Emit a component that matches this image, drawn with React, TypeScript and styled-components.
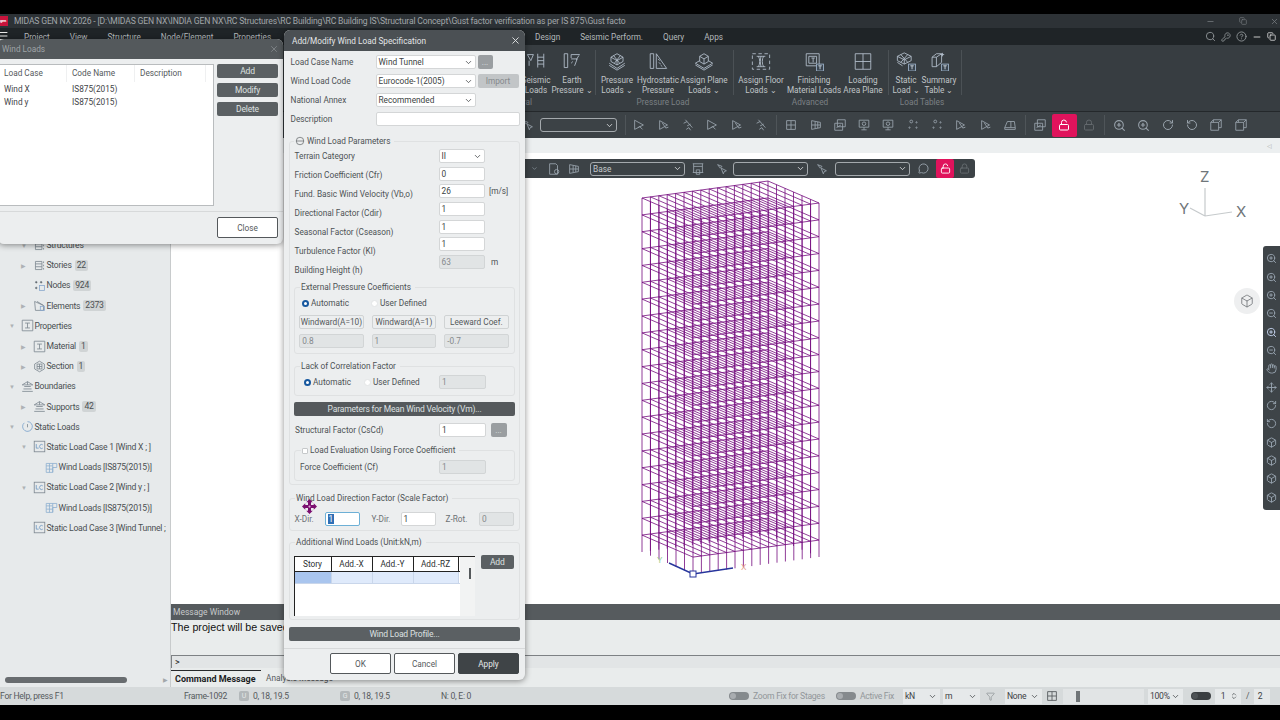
import React from "react";
import styled, { createGlobalStyle } from "styled-components";
import { ChevronDown, ChevronsUpDown, Search, KeyRound, CircleHelp, Minus, Copy, X, ZoomIn, ZoomOut, Hand, Box, LockOpen, Lock, Filter, Move, RotateCw, RotateCcw, MessageCircle, Menu } from "lucide-react";

const GlobalStyle = createGlobalStyle`
    html, body { margin: 0; padding: 0; background: #000; }
    * { box-sizing: border-box; }
    #root { font-family: "Roboto", "Liberation Sans", sans-serif; }
`;

const Page = styled.div`
    width: 1280px;
    height: 720px;
    position: relative;
    overflow: hidden;
    background: #000;
    display: flex;
    flex-direction: column;
    font-size: 8.25px;
    color: #4d5255;
`;

const BlackBand = styled.div<{ $h: number }>`
    height: ${(p) => p.$h}px;
    flex: none;
    background: #000;
`;

/* title + menu */
const TitleBar = styled.div`
    height: 14px;
    flex: none;
    background: #2d3236;
    display: flex;
    align-items: center;
    color: #a1a6a9;
    font-size: 8.6px;
    letter-spacing: -0.17px;
    white-space: nowrap;
`;

const Logo = styled.div`
    width: 8px;
    height: 10px;
    background: #c8143c;
    margin-right: 6px;
    color: #fff;
    font-size: 4px;
    font-weight: 700;
    line-height: 10px;
    overflow: hidden;
`;

const WindowControls = styled.div`
    margin-left: auto;
    display: flex;
    width: 74px;
    justify-content: space-between;
    padding-right: 1px;
    color: #777c80;
`;

const MenuBar = styled.div`
    height: 17px;
    flex: none;
    background: #1f2427;
    color: #b4b9bc;
    font-size: 8.2px;
    display: flex;
    align-items: center;
    gap: 20px;
    padding-left: 24px;
    position: relative;
`;

const MenuSpacer = styled.div`
    width: 224px;
`;

const HamburgerSlot = styled.div`
    position: absolute;
    left: -3px;
    top: 2px;
    color: #e8e8e8;
`;

const MenuIcons = styled.div`
    margin-left: auto;
    display: flex;
    align-items: center;
    gap: 5px;
    padding-right: 4px;
    color: #8f9598;
`;

/* ribbon */
const Ribbon = styled.div`
    height: 67px;
    flex: none;
    background: #373d41;
    display: flex;
    padding-left: 518px;
    border-bottom: 1px solid #24282b;
`;

const RibbonGroup = styled.div<{ $w: number }>`
    width: ${(p) => p.$w}px;
    flex: none;
    display: flex;
    flex-direction: column;
`;

const RibbonItems = styled.div`
    display: flex;
    height: 50px;
    padding-top: 7px;
`;

const RibbonItem = styled.div<{ $w: number }>`
    width: ${(p) => p.$w}px;
    display: flex;
    flex-direction: column;
    align-items: center;
    color: #c0c5c8;
    font-size: 8.2px;
    line-height: 10px;
    text-align: center;
    white-space: nowrap;
    svg.big { margin-bottom: 4px; flex: none; }
`;

const GroupLabel = styled.div<{ $right?: number }>`
    color: #7b8084;
    font-size: 8.25px;
    line-height: 11px;
    margin-top: 1.5px;
    white-space: nowrap;
    text-align: ${(p) => (p.$right ? "right" : "center")};
    padding-right: ${(p) => p.$right ?? 0}px;
    direction: ${(p) => (p.$right ? "rtl" : "ltr")};
`;

const RibbonSep = styled.div<{ $ml: number }>`
    width: 1px;
    margin: 5px 0 16px ${(p) => p.$ml}px;
    background: #4b5155;
`;

/* toolbar */
const Toolbar = styled.div`
    height: 26px;
    flex: none;
    background: #3c4246;
    display: flex;
    align-items: center;
    padding-left: 516px;
    color: #98a2ab;
`;

const ToolBtn = styled.div<{ $active?: boolean; $dim?: boolean }>`
    width: 24.3px;
    height: 23px;
    flex: none;
    display: flex;
    align-items: center;
    justify-content: center;
    border-radius: 2px;
    background: ${(p) => (p.$active ? "#e0135c" : "transparent")};
    color: ${(p) => (p.$active ? "#fff" : p.$dim ? "#62686c" : "inherit")};
`;

const ToolSep = styled.div<{ $ml: number; $mr: number }>`
    width: 1px;
    height: 20px;
    background: #4f5559;
    margin: 0 ${(p) => p.$mr}px 0 ${(p) => p.$ml}px;
`;

const DarkSelect = styled.div<{ $w: number; $ml?: number }>`
    width: ${(p) => p.$w}px;
    height: 14px;
    flex: none;
    margin-left: ${(p) => p.$ml ?? 0}px;
    border: 1px solid #a4a9ad;
    border-radius: 3px;
    color: #c6cacd;
    font-size: 8.25px;
    padding: 0 2px;
    display: flex;
    align-items: center;
    justify-content: space-between;
    svg { color: #eef0f1; }
`;

/* workspace */
const Workspace = styled.div`
    flex: 1;
    min-height: 0;
    display: flex;
`;

const LeftPanel = styled.div`
    width: 171px;
    flex: none;
    background: #e7eaeb;
    border-right: 1px solid #c8cbcc;
    display: flex;
    flex-direction: column;
    overflow: hidden;
`;

const Tree = styled.div`
    flex: 1;
    padding-top: 97px;
`;

const TreeRow = styled.div<{ $level: number }>`
    height: 20.2px;
    display: flex;
    align-items: center;
    padding-left: ${(p) => 9 + p.$level * 12}px;
    white-space: nowrap;
    color: #4a4f52;
    font-size: 8.6px;
    letter-spacing: -0.23px;
`;

const Arrow = styled.span<{ $hide?: boolean }>`
    width: 12px;
    flex: none;
    font-size: 6px;
    color: #aeb2b5;
    visibility: ${(p) => (p.$hide ? "hidden" : "visible")};
`;

const TreeIcon = styled.span`
    width: 13px;
    height: 13px;
    flex: none;
    margin-right: 0.5px;
    color: #7d8790;
    display: flex;
`;

const Count = styled.span`
    background: #d0d4d5;
    border-radius: 2px;
    margin-left: 3px;
    padding: 0 2px;
    line-height: 11px;
`;

const ScrollRow = styled.div`
    height: 9px;
    flex: none;
    margin-bottom: 3px;
    position: relative;
    display: flex;
    align-items: center;
    padding-left: 5px;
`;

const ScrollThumb = styled.div`
    width: 122px;
    height: 6px;
    border-radius: 3px;
    background: #686c6f;
`;

const ScrollEnd = styled.div`
    margin-left: 36px;
    font-size: 6px;
    color: #a2a7aa;
`;

const RightColumn = styled.div`
    flex: 1;
    display: flex;
    flex-direction: column;
    min-width: 0;
`;

const Strip = styled.div`
    height: 15px;
    flex: none;
    background: #eceff0;
    display: flex;
    justify-content: flex-end;
    align-items: center;
    padding-right: 8px;
    color: #a7abae;
    font-size: 6px;
`;

const Viewport = styled.div`
    flex: 1;
    background: #fff;
    position: relative;
`;

const ViewSvg = styled.svg`
    position: absolute;
    left: 0;
    top: 0;
`;

const FloatBar = styled.div`
    position: absolute;
    left: 354px;
    top: 6px;
    width: 450px;
    height: 19px;
    background: #3c4246;
    border-radius: 0 3px 3px 0;
    display: flex;
    align-items: center;
    color: #98a2ab;
`;

const FloatIcon = styled.div<{ $w: number; $active?: boolean; $dim?: boolean }>`
    width: ${(p) => p.$w}px;
    height: 19px;
    flex: none;
    display: flex;
    align-items: center;
    justify-content: center;
    background: ${(p) => (p.$active ? "#e0135c" : "transparent")};
    border-radius: 2px;
    color: ${(p) => (p.$active ? "#fff" : p.$dim ? "#666c70" : "inherit")};
`;

const Dock = styled.div`
    position: absolute;
    right: 0;
    top: 93px;
    width: 17px;
    height: 264px;
    background: #3e4448;
    border-radius: 3px 0 0 3px;
    padding-top: 0;
    display: flex;
    flex-direction: column;
    justify-content: space-evenly;
    align-items: center;
    color: #98a4b0;
`;

const CubeButton = styled.div`
    position: absolute;
    left: 1063px;
    top: 135px;
    width: 26px;
    height: 26px;
    border-radius: 50%;
    background: #eeeff0;
    color: #5a5f63;
    display: flex;
    align-items: center;
    justify-content: center;
`;

/* message window */
const MessageWindow = styled.div`
    height: 83px;
    flex: none;
    display: flex;
    flex-direction: column;
    background: #e9ecec;
`;

const MessageHeader = styled.div`
    height: 16px;
    background: #565b5e;
    color: #c6c9cb;
    padding-left: 2px;
    line-height: 16px;
    font-size: 8.5px;
`;

const MessageBody = styled.div`
    height: 35px;
    color: #111;
    font-family: "Liberation Sans", sans-serif;
    font-size: 10.7px;
    line-height: 14px;
`;

const CommandLine = styled.div`
    height: 13px;
    background: #e2e5e6;
    border-top: 1px solid #7d8184;
    border-left: 1px solid #7d8184;
    color: #222;
    font-size: 9px;
    padding-left: 3px;
    line-height: 13px;
`;

const Tabs = styled.div`
    flex: 1;
    display: flex;
    align-items: flex-end;
    margin-top: 2px;
`;

const Tab = styled.div<{ $active?: boolean }>`
    height: 17px;
    line-height: 17px;
    width: ${(p) => (p.$active ? "90px" : "auto")};
    padding-left: 4px;
    margin-left: ${(p) => (p.$active ? "0" : "1px")};
    border-top: ${(p) => (p.$active ? "1px solid #26292b" : "0")};
    color: ${(p) => (p.$active ? "#1b1d1f" : "#575b5e")};
    font-weight: ${(p) => (p.$active ? 700 : 400)};
    font-size: ${(p) => (p.$active ? "9px" : "8.3px")};
    white-space: nowrap;
`;

/* status */
const StatusBar = styled.div`
    height: 18px;
    flex: none;
    background: #d6dadb;
    display: flex;
    align-items: center;
    color: #55595c;
    font-size: 8.6px;
    letter-spacing: -0.28px;
    white-space: nowrap;
`;

const StatusCell = styled.div<{ $w: number; $dim?: boolean; $pl?: number }>`
    width: ${(p) => p.$w}px;
    flex: none;
    display: flex;
    align-items: center;
    gap: 4px;
    padding-left: ${(p) => p.$pl ?? 0}px;
    color: ${(p) => (p.$dim ? "#92979a" : "inherit")};
`;

const AxisBadge = styled.span`
    width: 10px;
    height: 10px;
    background: #b3b8ba;
    border-radius: 2px;
    color: #e6e8e9;
    font-size: 7px;
    text-align: center;
    line-height: 10px;
`;

const Toggle = styled.span<{ $dark?: boolean }>`
    width: 20px;
    height: 8px;
    flex: none;
    border-radius: 4px;
    background: ${(p) => (p.$dark ? "#3b3f42" : "#858a8d")};
    position: relative;
    &::after {
        content: "";
        position: absolute;
        left: 1px;
        top: 1px;
        width: 6px;
        height: 6px;
        border-radius: 50%;
        background: ${(p) => (p.$dark ? "#4d5255" : "#a9adb0")};
    }
`;

const StatusSelect = styled.div<{ $w: number; $ml?: number }>`
    width: ${(p) => p.$w}px;
    height: 15px;
    flex: none;
    margin-left: ${(p) => p.$ml ?? 0}px;
    background: #e6e9ea;
    padding: 0 3px 0 2px;
    display: flex;
    align-items: center;
    justify-content: space-between;
    color: #3d4144;
    font-size: 8.6px;
`;

const Slider = styled.div`
    width: 81px;
    height: 15px;
    margin-left: 4px;
    flex: none;
    background: #e1e4e5;
    position: relative;
    &::after {
        content: "";
        position: absolute;
        left: 13px;
        top: 2px;
        width: 4px;
        height: 11px;
        background: #6f7477;
    }
`;

/* dialogs */
const Dialog = styled.div<{ $l: number; $t: number; $w: number; $h: number }>`
    position: absolute;
    left: ${(p) => p.$l}px;
    top: ${(p) => p.$t}px;
    width: ${(p) => p.$w}px;
    height: ${(p) => p.$h}px;
    background: #eceeef;
    border-radius: 6px;
    box-shadow: 0 1px 6px rgba(0, 0, 0, 0.45);
    display: flex;
    flex-direction: column;
`;

const DialogHead = styled.div<{ $h: number; $dim?: boolean }>`
    height: ${(p) => p.$h}px;
    flex: none;
    background: ${(p) => (p.$dim ? "#54595c" : "#4b5054")};
    border-radius: 6px 6px 0 0;
    color: ${(p) => (p.$dim ? "#9fa4a7" : "#e4e6e7")};
    font-size: 8.25px;
    display: flex;
    align-items: center;
    justify-content: space-between;
    padding: 0 4px 0 8px;
`;

const WindTitle = styled.span`
    margin-left: -4px;
`;

const WindBody = styled.div`
    flex: 1;
    display: flex;
    flex-direction: column;
`;

const WindMain = styled.div`
    display: flex;
    padding: 5px 5px 0 0;
    height: 153px;
    border-bottom: 1px solid #d7d9da;
`;

const WindList = styled.div`
    width: 216px;
    height: 142px;
    background: #fff;
    border: 1px solid #b9bcbe;
    border-left: 0;
`;

const WindRow = styled.div<{ $head?: boolean }>`
    display: grid;
    grid-template-columns: 69px 68px 71px;
    height: ${(p) => (p.$head ? "17px" : "12.5px")};
    margin-bottom: ${(p) => (p.$head ? "1px" : "0")};
    align-items: stretch;
    color: ${(p) => (p.$head ? "#55595c" : "#3f4447")};
    span {
        padding-left: 5px;
        line-height: ${(p) => (p.$head ? "17px" : "12.5px")};
        border-right: ${(p) => (p.$head ? "1px solid #eff0f1" : "0")};
    }
    span:first-child { padding-left: 6px; }
`;

const WindButtons = styled.div`
    margin-left: 3px;
    width: 61px;
    display: flex;
    flex-direction: column;
    gap: 5px;
`;

const DarkBtn = styled.div<{ $w?: number; $mt?: number; $mx?: number; $bg?: string }>`
    width: ${(p) => (p.$w ? `${p.$w}px` : "auto")};
    height: 14px;
    flex: none;
    margin: ${(p) => p.$mt ?? 0}px ${(p) => p.$mx ?? 0}px 0;
    background: ${(p) => p.$bg ?? "#5b6063"};
    border-radius: 2px;
    color: #dde0e1;
    font-size: 8.5px;
    letter-spacing: -0.17px;
    display: flex;
    align-items: center;
    justify-content: center;
`;

const WindFoot = styled.div`
    display: flex;
    justify-content: flex-end;
    padding: 5px 5px 0 0;
`;

const LightBtn = styled.div<{ $w: number; $dark?: boolean }>`
    width: ${(p) => p.$w}px;
    height: 21px;
    background: ${(p) => (p.$dark ? "#3f4447" : "#fff")};
    border: 1px solid ${(p) => (p.$dark ? "#3f4447" : "#54585b")};
    border-radius: 2px;
    color: ${(p) => (p.$dark ? "#e6e8e9" : "#55595c")};
    font-size: 8.25px;
    display: flex;
    align-items: center;
    justify-content: center;
`;

const SpecBody = styled.div`
    flex: none;
    padding: 4px 5px 0;
    display: flex;
    flex-direction: column;
`;

const TopForm = styled.div`
    display: flex;
    flex-direction: column;
    gap: 5px;
`;

const FormRow = styled.div<{ $ml?: number; $mt?: number }>`
    display: flex;
    align-items: center;
    height: 14px;
    margin-top: ${(p) => p.$mt ?? 0}px;
    padding-left: ${(p) => p.$ml ?? 0}px;
`;

const RowLabel = styled.div<{ $w: number; $flush?: boolean }>`
    width: ${(p) => p.$w}px;
    flex: none;
    padding-left: ${(p) => (p.$flush ? 0 : 1.5)}px;
    white-space: nowrap;
`;

const Field = styled.div<{ $w?: number; $off?: boolean; $focus?: boolean }>`
    width: ${(p) => (p.$w ? `${p.$w}px` : "100%")};
    height: 14px;
    flex: none;
    background: ${(p) => (p.$off ? "#e1e4e5" : "#fff")};
    border: 1px solid ${(p) => (p.$focus ? "#6db0d6" : p.$off ? "#d2d5d6" : "#d4d6d7")};
    border-radius: 2px;
    color: ${(p) => (p.$off ? "#85898c" : "#3b3f42")};
    font-size: 8.3px;
    padding: 0 2px;
    display: flex;
    align-items: center;
    justify-content: space-between;
    overflow: hidden;
    white-space: nowrap;
`;

const SelectedChar = styled.span`
    background: #2f6fb5;
    color: #fff;
    padding: 0 1px;
`;

const PaleBtn = styled.div<{ $w: number; $ml?: number; $light?: boolean }>`
    width: ${(p) => p.$w}px;
    height: 14px;
    flex: none;
    margin-left: ${(p) => p.$ml ?? 2}px;
    background: ${(p) => (p.$light ? "#c2c5c7" : "#9a9ea1")};
    border-radius: 2px;
    color: ${(p) => (p.$light ? "#85898c" : "#dfe1e2")};
    font-size: 8.25px;
    display: flex;
    align-items: center;
    justify-content: center;
`;

const GroupBox = styled.div<{ $mt: number; $h?: number; $mx?: number; $mb?: number }>`
    position: relative;
    margin: ${(p) => p.$mt}px ${(p) => p.$mx ?? 0}px ${(p) => p.$mb ?? 0}px;
    height: ${(p) => (p.$h ? `${p.$h}px` : "auto")};
    border: 1px solid #dfe1e2;
    border-radius: 3px;
`;

const Legend = styled.div<{ $l: number }>`
    position: absolute;
    left: ${(p) => p.$l}px;
    top: -6px;
    height: 11px;
    padding: 0 4px 0 1px;
    background: #eceeef;
    display: flex;
    align-items: center;
    gap: 2px;
    line-height: 11px;
    white-space: nowrap;
`;

const ParamGrid = styled.div`
    display: flex;
    padding: 5px 0 0 4.5px;
`;

const LabelCol = styled.div`
    width: 144px;
    flex: none;
`;

const ParamLabel = styled.div`
    height: 19px;
    line-height: 19px;
    white-space: nowrap;
`;

const InputCol = styled.div`
    display: flex;
    flex-direction: column;
    gap: 3.7px;
    padding-top: 2.5px;
`;

const InputRow = styled.div`
    display: flex;
    align-items: center;
    gap: 4px;
    height: 14px;
`;

const RadioItem = styled.div<{ $w: number }>`
    width: ${(p) => p.$w}px;
    flex: none;
    display: flex;
    align-items: center;
    gap: 2px;
    white-space: nowrap;
`;

const RadioDot = styled.span<{ $on?: boolean }>`
    width: 7px;
    height: 7px;
    flex: none;
    border-radius: 50%;
    background: #fff;
    border: ${(p) => (p.$on ? "2px solid #17589f" : "1px solid #e3e5e6")};
`;

const CheckBox = styled.span`
    width: 6px;
    height: 6px;
    background: #fff;
    border: 1px solid #c5c8ca;
    border-radius: 1px;
`;

const CoefGrid = styled.div`
    display: grid;
    grid-template-columns: 64.4px 64.6px 64.4px;
    column-gap: 8px;
    row-gap: 4.6px;
    padding: 5px 0 0 4.2px;
`;

const CoefButton = styled.div`
    height: 14px;
    background: #eceeef;
    border: 1px solid #d0d3d4;
    border-radius: 2px;
    text-align: center;
    line-height: 12px;
    white-space: nowrap;
    color: #55595c;
`;

const DirRow = styled.div`
    display: flex;
    align-items: center;
    padding: 13px 0 0 4.5px;
`;

const DirLabel = styled.div<{ $w: number; $ml?: number }>`
    width: ${(p) => p.$w}px;
    margin-left: ${(p) => p.$ml ?? 0}px;
    flex: none;
    color: #6d7174;
`;

const LoadsRow = styled.div`
    display: flex;
    align-items: flex-start;
    padding: 13.5px 0 0 3.5px;
    gap: 6px;
`;

const LoadsTable = styled.div`
    width: 181px;
    height: 60px;
    background: #fff;
    border-top: 1px solid #222;
    border-left: 1px solid #222;
    display: flex;
`;

const LoadsCols = styled.div`
    width: 165px;
`;

const LoadsLine = styled.div<{ $data?: boolean }>`
    display: grid;
    grid-template-columns: 37px 41px 41px 45px;
    height: ${(p) => (p.$data ? "12px" : "15px")};
    border-bottom: 1px solid ${(p) => (p.$data ? "#c9d6ea" : "#222")};
`;

const LoadsCell = styled.div<{ $head?: boolean; $sel?: boolean }>`
    background: ${(p) => (p.$sel ? "#a9c5ee" : p.$head ? "#fff" : "#dfeafb")};
    border-right: 1px solid ${(p) => (p.$head ? "#222" : "#c9d6ea")};
    color: #2c2f31;
    text-align: center;
    line-height: 14px;
`;

const LoadsScroll = styled.div`
    flex: 1;
    background: #f2f3f3;
    padding: 11px 0 0 9.5px;
`;

const LoadsThumb = styled.div`
    width: 1.5px;
    height: 11px;
    background: #55595c;
`;

const SpecFoot = styled.div`
    margin-top: 7px;
    border-top: 1px solid #d7d9da;
    display: flex;
    justify-content: flex-end;
    gap: 3px;
    padding: 4px 6px 0 0;
`;

const MoveCursor = styled.svg`
    position: absolute;
    left: 18px;
    top: 469px;
`;

/* small drawings */
function Ic({ s = 14, children, className }: { s?: number; children: React.ReactNode; className?: string }) {
    return (
        <svg className={className} width={s} height={s} viewBox="0 0 16 16" fill="none" stroke="currentColor" strokeWidth="1">
            {children}
        </svg>
    );
}

const TriA = () => <Ic><path d="M3 2.5 L13 8 L3 13 Z M9 10 l3 3 M7 11 l2-2" /></Ic>;
const TriB = () => <Ic><path d="M3 3 L12 8 L3 13 Z M6 5.5 l4 6 l3-1" /></Ic>;
const Hatch = () => <Ic><path d="M5 2 l8 9 M3 6 l4 -2 M7 9 l4-2 M6 13 l3-2 l2 3" /></Ic>;
const Panel = () => <Ic><path d="M3 3 h10 v10 h-10 Z M3 8 h5 v5 M8 3 v5 h5" /></Ic>;
const Mesh = () => <Ic><path d="M3 3 L13 5 V11 L3 13 Z M7 4 V12 M10 4.5 V11.5 M3 8 H13" /></Ic>;
const Stack = () => <Ic><path d="M5 2 h9 v8 h-9 Z M2 6 h9 v8 h-9 Z M4 11 l5-3" /></Ic>;
const Monitor = () => <Ic><path d="M2.5 2.5 h11 v8 h-11 Z M5 13.5 h6 M8 10.5 v3" /><circle cx="8" cy="6.5" r="2" /></Ic>;
const Dots = () => <Ic><circle cx="6" cy="4" r="1.6" /><circle cx="12" cy="5" r=".7" /><circle cx="4" cy="11" r=".7" /><circle cx="12" cy="11" r=".7" /></Ic>;
const Slab = () => <Ic><path d="M2 11 L5 4 H13 L14 11 Z M2 11 v2 h12 v-2 M9 4 v7" /></Ic>;
const Cursor = () => <Ic><path d="M3 3 l5 2 l-2 2 Z M7 7 l6 3 l-2.5 1 l-1 2.5 Z" /></Ic>;
const Sheet = () => <Ic><path d="M3 2 h7 l2 2 v10 h-9 Z" /><circle cx="11" cy="11" r="2.5" /></Ic>;
const Tower = () => <Ic><path d="M2 2 h12 M3 5 h10 M3 2 v10 M13 2 v10 M6 9 h4 v5 h-4 Z M2 12 h12" /></Ic>;
const Cube3 = () => <Ic><path d="M2 5 h9 v9 h-9 Z M5 2 h9 v9 h-3 M2 5 l3-3 M11 5 l3-3 M5 2 v3" /></Ic>;

const Badge = () => (
    <>
        <rect x="15" y="14" width="8" height="8" fill="#3a4550" stroke="#9fb4cc" strokeWidth="1" />
        <path d="M17 16 h4 M19 16 v4" stroke="#d5dde5" strokeWidth="1" />
    </>
);

function Rib({ children }: { children: React.ReactNode }) {
    return (
        <svg className="big" width="22" height="19" viewBox="0 0 24 22" fill="none" stroke="#b4bfcc" strokeWidth="1">
            {children}
        </svg>
    );
}

const RibSeismic = () => <Rib><path d="M2 3 h7 l-3 7 Z M4 10 v6 M14 2 v16 M21 2 v16 M14 6 h7 M14 10 h7 M14 14 h7" /></Rib>;
const RibEarth = () => <Rib><path d="M3 2 h4 v16 h-4 Z M11 3 h10 M11 3 v4 M11 8 h7 l-3 8 M11 13 l2-2 M20 4 l-3 5" /></Rib>;
const RibPressure = () => <Rib><path d="M12 2 L19 6 V11 L12 15 L5 11 V6 Z M5 6 L12 10 L19 6 M12 10 V15 M8 4 l7 9 M16 4 l-7 9 M3 13 L12 19 L21 13 M3 15.5 L12 21 L21 15.5" /></Rib>;
const RibHydro = () => <Rib><path d="M3 2 h4 v17 h-4 Z M10 2 V19 H22 Z M12 8 l2 2 M13 12 l2 2 M15 15 l2 2" /></Rib>;
const RibPlane = () => <Rib><path d="M12 2 L17 5 V11 L12 14 L7 11 V5 Z M7 5 L12 8 L17 5 M12 8 V14 M2 13 L12 19 L22 13 L17 10 M7 10 L2 13 M2 15 L12 21 L22 15" /></Rib>;
const RibFloor = () => <Rib><path d="M2 2 h20 v18 h-20 Z" strokeDasharray="4 3" /><path d="M7 5 h10 M7 17 h10 M12 5 C11 9 11 13 12 17 M9 5 C11 8 11 14 9 17 M15 5 C13 8 13 14 15 17" /></Rib>;
const RibFinish = () => <Rib><path d="M3 2 h15 v14 h-15 Z M6 5 h9 v8 h-9 Z M9 7 h4 M11 7 v5" /><Badge /></Rib>;
const RibArea = () => <Rib><path d="M3 2 h18 v18 h-18 Z M12 2 v18 M3 11 h18" /></Rib>;
const RibStatic = () => <Rib><path d="M10 1 L18 5 V10 L10 14 L2 10 V5 Z M2 5 L10 9 L18 5 M10 9 V14 M6 3 l8 9 M14 3 l-8 9 M2 12 L8 16" /><Badge /></Rib>;
const RibSummary = () => <Rib><path d="M4 6 L9 2 L15 2 V12 L9 17 H4 Z M4 6 H9 V17 M9 6 L15 2 M16 1 v4 M14 3 h4" /><Badge /></Rib>;

const TreeStories = () => <Ic s={13}><path d="M3 3 h8 v10 h-8 Z M3 6 h8 M3 9.5 h8 M13 3 v2 M13 7 v2 M13 11 v2" /></Ic>;
const TreeNodes = () => <Ic s={13}><circle cx="4" cy="4" r="1" fill="#333" /><circle cx="10" cy="4" r="1" fill="#333" /><circle cx="4" cy="11" r="1" fill="#333" /><rect x="8" y="8" width="6" height="6" stroke="#89a8cc" /></Ic>;
const TreeElements = () => <Ic s={13}><path d="M2 3 L13 8 V14 H3 Z M5 3 l8 5" /><rect x="9" y="9" width="5" height="5" stroke="#89a8cc" /></Ic>;
const TreeProp = () => <Ic s={13}><path d="M1.5 1.5 h13 v13 h-13 Z M5 5 h6 M5 11 h6 M8 5 v6" /></Ic>;
const TreeSection = () => <Ic s={13}><path d="M8 1.5 L14 5 V11 L8 14.5 L2 11 V5 Z M5 5 h6 v6 h-6 Z M5 8 h6 M8 5 v6" /></Ic>;
const TreeSupport = () => <Ic s={13}><path d="M1.5 6 L8 2 L14.5 6 Z M4 8 h8 M3 11 h10 M1.5 14 h13 M8 2 v4" /></Ic>;
const TreeStatic = () => <Ic s={13}><path d="M8 2 A6 6 0 1 1 4 3.5" stroke="#7aa3cc" /><path d="M8 5 v4 h0" /></Ic>;
const TreeCase = () => <Ic s={13}><rect x="1.5" y="1.5" width="13" height="13" /><path d="M4 5 v5 h3 M12 6 a2.5 2.5 0 1 0 0 4" stroke="#6d97c2" /></Ic>;
const TreeWind = () => <Ic s={13}><path d="M1.5 3 h13 v5 h-5 v6 h-8 Z M1.5 6 h8 M5.5 3 v11 M9.5 3 v11 M1.5 10 h8" stroke="#8fb0d0" /></Ic>;

const ribbonGroups = [
    {
        label: "General", w: 72, right: 58, items: [
            { w: 36, icon: <RibSeismic />, text: ["Seismic", "Loads"] },
            { w: 36, icon: <RibEarth />, text: ["Earth", "Pressure"], more: true },
        ]
    },
    {
        label: "Pressure Load", w: 134, items: [
            { w: 42, icon: <RibPressure />, text: ["Pressure", "Loads"], more: true },
            { w: 40, icon: <RibHydro />, text: ["Hydrostatic", "Pressure"] },
            { w: 52, icon: <RibPlane />, text: ["Assign Plane", "Loads"], more: true },
        ]
    },
    {
        label: "Advanced", w: 152, items: [
            { w: 54, icon: <RibFloor />, text: ["Assign Floor", "Loads"], more: true },
            { w: 52, icon: <RibFinish />, text: ["Finishing", "Material Loads"] },
            { w: 46, icon: <RibArea />, text: ["Loading", "Area Plane"] },
        ]
    },
    {
        label: "Load Tables", w: 66, items: [
            { w: 34, icon: <RibStatic />, text: ["Static", "Load"], more: true },
            { w: 32, icon: <RibSummary />, text: ["Summary", "Table"], more: true },
        ]
    },
];

const treeRows = [
    { level: 1, arrow: "open", icon: <TreeStories />, text: "Structures" },
    { level: 1, arrow: "closed", icon: <TreeStories />, text: "Stories", count: "22" },
    { level: 1, icon: <TreeNodes />, text: "Nodes", count: "924" },
    { level: 1, arrow: "closed", icon: <TreeElements />, text: "Elements", count: "2373" },
    { level: 0, arrow: "open", icon: <TreeProp />, text: "Properties" },
    { level: 1, arrow: "closed", icon: <TreeProp />, text: "Material", count: "1" },
    { level: 1, arrow: "closed", icon: <TreeSection />, text: "Section", count: "1" },
    { level: 0, arrow: "open", icon: <TreeSupport />, text: "Boundaries" },
    { level: 1, arrow: "closed", icon: <TreeSupport />, text: "Supports", count: "42" },
    { level: 0, arrow: "open", icon: <TreeStatic />, text: "Static Loads" },
    { level: 1, arrow: "open", icon: <TreeCase />, text: "Static Load Case 1 [Wind X ; ]" },
    { level: 2, icon: <TreeWind />, text: "Wind Loads [IS875(2015)]" },
    { level: 1, arrow: "open", icon: <TreeCase />, text: "Static Load Case 2 [Wind y ; ]" },
    { level: 2, icon: <TreeWind />, text: "Wind Loads [IS875(2015)]" },
    { level: 1, icon: <TreeCase />, text: "Static Load Case 3 [Wind Tunnel ;" },
];

// building frame: perimeter columns, floor beams, 6 x 15 bays, 21 storeys
function framePath() {
    const pt = (i: number, j: number, k: number) => {
        const x = 693 + (i * -51) / 6 + (j * 126) / 15;
        const y = 220 + (i * -22) / 6 + (j * -17) / 15 + (k * 354) / 21;
        return `${x.toFixed(1)} ${y.toFixed(1)}`;
    };
    let d = "";
    const line = (a: string, b: string) => { d += `M${a}L${b}`; };
    for (let j = 0; j <= 15; j++) {
        line(pt(0, j, 0), pt(0, j, 21));
        line(pt(6, j, 0), pt(6, j, 21));
    }
    for (let i = 1; i < 6; i++) {
        line(pt(i, 0, 0), pt(i, 0, 21));
        line(pt(i, 15, 0), pt(i, 15, 21));
    }
    for (let k = 0; k <= 20; k++) {
        line(pt(0, 0, k), pt(0, 15, k));
        line(pt(6, 0, k), pt(6, 15, k));
        for (let j = 0; j <= 15; j++) line(pt(0, j, k), pt(6, j, k));
    }
    return d;
}

const FRAME = framePath();

export default function App() {
    const chev = <ChevronDown size={9} strokeWidth={2} />;
    return (
        <Page>
            <GlobalStyle />
            <BlackBand $h={14} />
            <TitleBar>
                <Logo>gen</Logo>
                MIDAS GEN NX 2026 - [D:\MIDAS GEN NX\INDIA GEN NX\RC Structures\RC Building\RC Building IS\Structural Concept\Gust factor verification as per IS 875\Gust facto
                <WindowControls>
                    <Minus size={9} />
                    <Copy size={8} />
                    <X size={9} />
                </WindowControls>
            </TitleBar>
            <MenuBar>
                <HamburgerSlot><Menu size={12} /></HamburgerSlot>
                <span>Project</span>
                <span>View</span>
                <span>Structure</span>
                <span>Node/Element</span>
                <span>Properties</span>
                <MenuSpacer />
                <span>Design</span>
                <span>Seismic Perform.</span>
                <span>Query</span>
                <span>Apps</span>
                <MenuIcons>
                    <Search size={11} />
                    <KeyRound size={10} />
                    <CircleHelp size={11} />
                    <Minus size={10} color="#e8e8e8" />
                    <Copy size={9} color="#e8e8e8" />
                </MenuIcons>
            </MenuBar>
            <Ribbon>
                {ribbonGroups.map((g, n) => (
                    <React.Fragment key={g.label}>
                        <RibbonGroup $w={g.w}>
                            <RibbonItems>
                                {g.items.map((it) => (
                                    <RibbonItem key={it.text.join()} $w={it.w}>
                                        {it.icon}
                                        <span>{it.text[0]}</span>
                                        <span>{it.text[1]}{it.more ? " ⌄" : ""}</span>
                                    </RibbonItem>
                                ))}
                            </RibbonItems>
                            <GroupLabel $right={g.right}>{g.label}</GroupLabel>
                        </RibbonGroup>
                        <RibbonSep $ml={[5, 3, 2, 6][n]} />
                    </React.Fragment>
                ))}
            </Ribbon>
            <Toolbar>
                <ToolBtn><Cursor /></ToolBtn>
                <DarkSelect $w={77}><span />{chev}</DarkSelect>
                <ToolSep $ml={8} $mr={1} />
                <ToolBtn><TriA /></ToolBtn>
                <ToolBtn><TriB /></ToolBtn>
                <ToolBtn><Hatch /></ToolBtn>
                <ToolBtn><TriA /></ToolBtn>
                <ToolBtn><TriB /></ToolBtn>
                <ToolBtn><Hatch /></ToolBtn>
                <ToolSep $ml={3} $mr={2} />
                <ToolBtn><Panel /></ToolBtn>
                <ToolBtn><Mesh /></ToolBtn>
                <ToolBtn><Stack /></ToolBtn>
                <ToolBtn><Monitor /></ToolBtn>
                <ToolBtn><Monitor /></ToolBtn>
                <ToolBtn><Dots /></ToolBtn>
                <ToolBtn><Dots /></ToolBtn>
                <ToolBtn><TriB /></ToolBtn>
                <ToolBtn><TriB /></ToolBtn>
                <ToolBtn><Slab /></ToolBtn>
                <ToolSep $ml={3} $mr={2} />
                <ToolBtn><Stack /></ToolBtn>
                <ToolBtn $active><LockOpen size={12} /></ToolBtn>
                <ToolBtn $dim><Lock size={12} /></ToolBtn>
                <ToolSep $ml={3} $mr={2} />
                <ToolBtn><ZoomIn size={13} /></ToolBtn>
                <ToolBtn><ZoomIn size={13} /></ToolBtn>
                <ToolBtn><RotateCw size={12} /></ToolBtn>
                <ToolBtn><RotateCcw size={12} /></ToolBtn>
                <ToolBtn><Cube3 /></ToolBtn>
                <ToolBtn><Cube3 /></ToolBtn>
            </Toolbar>
            <Workspace>
                <LeftPanel>
                    <Tree>
                        {treeRows.map((r, n) => (
                            <TreeRow key={n} $level={r.level}>
                                <Arrow $hide={!r.arrow}>{r.arrow === "open" ? "▼" : "▶"}</Arrow>
                                <TreeIcon>{r.icon}</TreeIcon>
                                {r.text}
                                {r.count && <Count>{r.count}</Count>}
                            </TreeRow>
                        ))}
                    </Tree>
                    <ScrollRow>
                        <ScrollThumb />
                        <ScrollEnd>▶</ScrollEnd>
                    </ScrollRow>
                </LeftPanel>
                <RightColumn>
                    <Strip>◁</Strip>
                    <Viewport>
                        <ViewSvg width="1109" height="451" viewBox="171 153 1109 451" fill="none">
                            <path d={FRAME} stroke="#740a7e" strokeWidth="0.8" />
                            <path d="M669 563 L693 574 L733 568" stroke="#27359c" strokeWidth="1.4" />
                            <rect x="690" y="571" width="6" height="6" stroke="#27359c" fill="#fff" />
                            <text x="657" y="563" fontSize="8" fill="#8ccb8c" fontFamily="Inter">Y</text>
                            <text x="741" y="570" fontSize="8" fill="#e29a86" fontFamily="Inter">X</text>
                            <path d="M1205 216 V188 M1205 216 L1190 208 M1205 216 L1232 212" stroke="#c6cacc" strokeWidth="1.2" />
                            <text x="1200" y="182" fontSize="15" fill="#70767a" fontFamily="Inter">Z</text>
                            <text x="1179" y="214" fontSize="15" fill="#70767a" fontFamily="Inter">Y</text>
                            <text x="1236" y="217" fontSize="15" fill="#70767a" fontFamily="Inter">X</text>
                        </ViewSvg>
                        <FloatBar>
                            <FloatIcon $w={19}><ChevronDown size={7} /></FloatIcon>
                            <FloatIcon $w={20}><Sheet /></FloatIcon>
                            <FloatIcon $w={20}><Mesh /></FloatIcon>
                            <DarkSelect $w={95} $ml={6}>Base{chev}</DarkSelect>
                            <FloatIcon $w={26}><Tower /></FloatIcon>
                            <FloatIcon $w={22}><Cursor /></FloatIcon>
                            <DarkSelect $w={75}><span />{chev}</DarkSelect>
                            <FloatIcon $w={27}><Cursor /></FloatIcon>
                            <DarkSelect $w={75}><span />{chev}</DarkSelect>
                            <FloatIcon $w={26}><MessageCircle size={11} /></FloatIcon>
                            <FloatIcon $w={18} $active><LockOpen size={11} /></FloatIcon>
                            <FloatIcon $w={21} $dim><Lock size={11} /></FloatIcon>
                        </FloatBar>
                        <CubeButton><Box size={14} strokeWidth={1.2} /></CubeButton>
                        <Dock>
                            <ZoomIn size={11} />
                            <ZoomIn size={11} />
                            <ZoomIn size={11} />
                            <ZoomOut size={11} />
                            <ZoomIn size={11} color="#c4d2ee" />
                            <ZoomOut size={11} />
                            <Hand size={11} />
                            <Move size={11} />
                            <RotateCw size={11} />
                            <RotateCcw size={11} />
                            <Box size={11} />
                            <Box size={11} />
                            <Box size={11} />
                            <Box size={11} />
                        </Dock>
                    </Viewport>
                    <MessageWindow>
                        <MessageHeader>Message Window</MessageHeader>
                        <MessageBody>The project will be saved automatically.</MessageBody>
                        <CommandLine>&gt;</CommandLine>
                        <Tabs>
                            <Tab $active>Command Message</Tab>
                            <Tab>Analysis Message</Tab>
                        </Tabs>
                    </MessageWindow>
                </RightColumn>
            </Workspace>
            <StatusBar>
                <StatusCell $w={184}>For Help, press F1</StatusCell>
                <StatusCell $w={55}>Frame-1092</StatusCell>
                <StatusCell $w={101}><AxisBadge>U</AxisBadge>0, 18, 19.5</StatusCell>
                <StatusCell $w={101}><AxisBadge>G</AxisBadge>0, 18, 19.5</StatusCell>
                <StatusCell $w={288}>N: 0, E: 0</StatusCell>
                <StatusCell $w={107} $dim><Toggle />Zoom Fix for Stages</StatusCell>
                <StatusCell $w={67} $dim><Toggle />Active Fix</StatusCell>
                <StatusSelect $w={37}>kN{chev}</StatusSelect>
                <StatusSelect $w={37} $ml={3}>m{chev}</StatusSelect>
                <StatusCell $w={25} $dim $pl={6}><Filter size={9} /></StatusCell>
                <StatusSelect $w={37}>None{chev}</StatusSelect>
                <StatusCell $w={17} $pl={3}><Panel /></StatusCell>
                <Slider />
                <StatusSelect $w={35} $ml={4}>100%{chev}</StatusSelect>
                <StatusCell $w={32} $pl={8}><Toggle $dark /></StatusCell>
                <StatusSelect $w={26}>&nbsp;&nbsp;1<ChevronsUpDown size={8} /></StatusSelect>
                <StatusCell $w={13} $pl={5}>/</StatusCell>
                <StatusSelect $w={16}>&nbsp;2</StatusSelect>
            </StatusBar>
            <BlackBand $h={15} />

            <Dialog $l={-2} $t={39} $w={285} $h={205}>
                <DialogHead $h={20} $dim>
                    <WindTitle>Wind Loads</WindTitle>
                    <X size={10} color="#83888b" />
                </DialogHead>
                <WindBody>
                    <WindMain>
                        <WindList>
                            <WindRow $head><span>Load Case</span><span>Code Name</span><span>Description</span></WindRow>
                            <WindRow><span>Wind X</span><span>IS875(2015)</span></WindRow>
                            <WindRow><span>Wind y</span><span>IS875(2015)</span></WindRow>
                        </WindList>
                        <WindButtons>
                            <DarkBtn>Add</DarkBtn>
                            <DarkBtn>Modify</DarkBtn>
                            <DarkBtn>Delete</DarkBtn>
                        </WindButtons>
                    </WindMain>
                    <WindFoot><LightBtn $w={61}>Close</LightBtn></WindFoot>
                </WindBody>
            </Dialog>

            <Dialog $l={284} $t={30} $w={241} $h={650}>
                <DialogHead $h={21}>
                    Add/Modify Wind Load Specification
                    <X size={11} />
                </DialogHead>
                <SpecBody>
                    <TopForm>
                        <FormRow>
                            <RowLabel $w={86.5}>Load Case Name</RowLabel>
                            <Field $w={100}>Wind Tunnel{chev}</Field>
                            <PaleBtn $w={15}>...</PaleBtn>
                        </FormRow>
                        <FormRow>
                            <RowLabel $w={86.5}>Wind Load Code</RowLabel>
                            <Field $w={100}>Eurocode-1(2005){chev}</Field>
                            <PaleBtn $w={41} $light>Import</PaleBtn>
                        </FormRow>
                        <FormRow>
                            <RowLabel $w={86.5}>National Annex</RowLabel>
                            <Field $w={100}>Recommended{chev}</Field>
                        </FormRow>
                        <FormRow>
                            <RowLabel $w={86.5}>Description</RowLabel>
                            <Field $w={144} />
                        </FormRow>
                    </TopForm>

                    <GroupBox $mt={14.5}>
                        <Legend $l={4}>
                            <Ic s={10}><circle cx="8" cy="8" r="6" /><path d="M2 8 h12" /></Ic>
                            Wind Load Parameters
                        </Legend>
                        <ParamGrid>
                            <LabelCol>
                                <ParamLabel>Terrain Category</ParamLabel>
                                <ParamLabel>Friction Coefficient (Cfr)</ParamLabel>
                                <ParamLabel>Fund. Basic Wind Velocity (Vb,o)</ParamLabel>
                                <ParamLabel>Directional Factor (Cdir)</ParamLabel>
                                <ParamLabel>Seasonal Factor (Cseason)</ParamLabel>
                                <ParamLabel>Turbulence Factor (Kl)</ParamLabel>
                                <ParamLabel>Building Height (h)</ParamLabel>
                            </LabelCol>
                            <InputCol>
                                <InputRow><Field $w={46.5}>II{chev}</Field></InputRow>
                                <InputRow><Field $w={46.5}>0</Field></InputRow>
                                <InputRow><Field $w={46.5}>26</Field>[m/s]</InputRow>
                                <InputRow><Field $w={46.5}>1</Field></InputRow>
                                <InputRow><Field $w={46.5}>1</Field></InputRow>
                                <InputRow><Field $w={46.5}>1</Field></InputRow>
                                <InputRow><Field $w={46.5} $off>63</Field>&nbsp;m</InputRow>
                            </InputCol>
                        </ParamGrid>

                        <GroupBox $mt={7.5} $h={67} $mx={4}>
                            <Legend $l={5}>External Pressure Coefficients</Legend>
                            <FormRow $ml={7} $mt={8}>
                                <RadioItem $w={69}><RadioDot $on />Automatic</RadioItem>
                                <RadioItem $w={80}><RadioDot />User Defined</RadioItem>
                            </FormRow>
                            <CoefGrid>
                                <CoefButton>Windward(A=10)</CoefButton>
                                <CoefButton>Windward(A=1)</CoefButton>
                                <CoefButton>Leeward Coef.</CoefButton>
                                <Field $off>0.8</Field>
                                <Field $off>1</Field>
                                <Field $off>-0.7</Field>
                            </CoefGrid>
                        </GroupBox>

                        <GroupBox $mt={12} $h={30} $mx={4}>
                            <Legend $l={5}>Lack of Correlation Factor</Legend>
                            <FormRow $ml={9} $mt={8}>
                                <RadioItem $w={60}><RadioDot $on />Automatic</RadioItem>
                                <RadioItem $w={75}><RadioDot />User Defined</RadioItem>
                                <Field $w={47} $off>1</Field>
                            </FormRow>
                        </GroupBox>

                        <DarkBtn $mt={6} $mx={4} $bg="#55595c">Parameters for Mean Wind Velocity (Vm)...</DarkBtn>

                        <FormRow $ml={5} $mt={7.3}>
                            <RowLabel $w={144} $flush>Structural Factor (CsCd)</RowLabel>
                            <Field $w={46.5}>1</Field>
                            <PaleBtn $w={16} $ml={5}>...</PaleBtn>
                        </FormRow>

                        <GroupBox $mt={13} $h={31} $mx={4} $mb={3}>
                            <Legend $l={6}><CheckBox />Load Evaluation Using Force Coefficient</Legend>
                            <FormRow $ml={5} $mt={9}>
                                <RowLabel $w={139} $flush>Force Coefficient (Cf)</RowLabel>
                                <Field $w={46.5} $off>1</Field>
                            </FormRow>
                        </GroupBox>
                    </GroupBox>

                    <GroupBox $mt={13} $h={33}>
                        <Legend $l={5}>Wind Load Direction Factor (Scale Factor)</Legend>
                        <DirRow>
                            <DirLabel $w={30}>X-Dir.</DirLabel>
                            <Field $w={35.5} $focus><SelectedChar>1</SelectedChar></Field>
                            <DirLabel $w={29} $ml={11.5}>Y-Dir.</DirLabel>
                            <Field $w={35}>1</Field>
                            <DirLabel $w={33.5} $ml={10}>Z-Rot.</DirLabel>
                            <Field $w={35} $off>0</Field>
                        </DirRow>
                    </GroupBox>

                    <GroupBox $mt={10.7} $h={78.5}>
                        <Legend $l={5}>Additional Wind Loads (Unit:kN,m)</Legend>
                        <LoadsRow>
                            <LoadsTable>
                                <LoadsCols>
                                    <LoadsLine>
                                        <LoadsCell $head>Story</LoadsCell>
                                        <LoadsCell $head>Add.-X</LoadsCell>
                                        <LoadsCell $head>Add.-Y</LoadsCell>
                                        <LoadsCell $head>Add.-RZ</LoadsCell>
                                    </LoadsLine>
                                    <LoadsLine $data>
                                        <LoadsCell $sel />
                                        <LoadsCell />
                                        <LoadsCell />
                                        <LoadsCell />
                                    </LoadsLine>
                                </LoadsCols>
                                <LoadsScroll><LoadsThumb /></LoadsScroll>
                            </LoadsTable>
                            <DarkBtn $w={33.5} $mt={-1.5}>Add</DarkBtn>
                        </LoadsRow>
                    </GroupBox>

                    <DarkBtn $mt={6.7}>Wind Load Profile...</DarkBtn>
                </SpecBody>
                <SpecFoot>
                    <LightBtn $w={61}>OK</LightBtn>
                    <LightBtn $w={61}>Cancel</LightBtn>
                    <LightBtn $w={61} $dark>Apply</LightBtn>
                </SpecFoot>
                <MoveCursor width="15" height="15" viewBox="0 0 16 16" fill="#7b0f70">
                    <path d="M8 0 L11.5 3.5 H9.6 V6.4 H12.5 V4.5 L16 8 L12.5 11.5 V9.6 H9.6 V12.5 H11.5 L8 16 L4.5 12.5 H6.4 V9.6 H3.5 V11.5 L0 8 L3.5 4.5 V6.4 H6.4 V3.5 H4.5 Z" />
                    <circle cx="8" cy="8" r="1.2" fill="#d9a7d2" />
                </MoveCursor>
            </Dialog>
        </Page>
    );
}
